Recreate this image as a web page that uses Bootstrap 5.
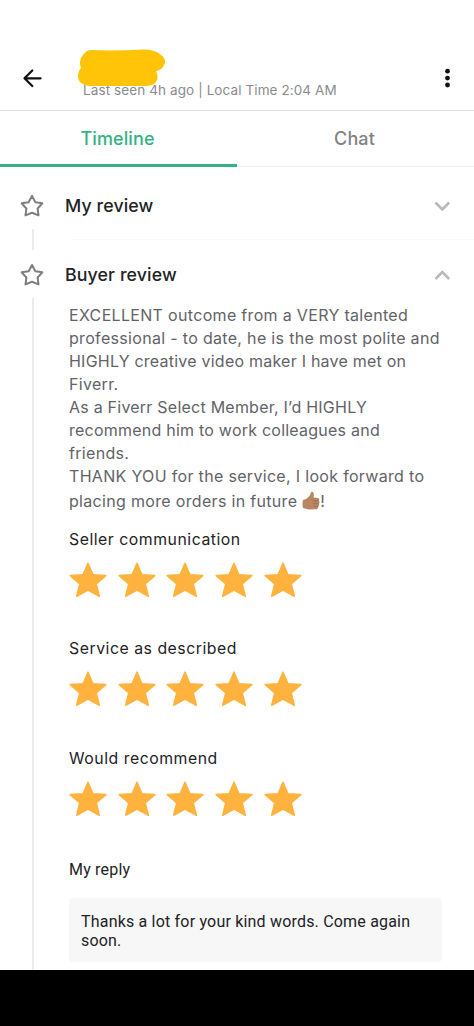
<!DOCTYPE html>
<html lang="en">
<head>
    <meta charset="UTF-8">
    <meta name="viewport" content="width=device-width, initial-scale=1.0">
    <title>Order timeline</title>
    <link rel="stylesheet" href="https://cdn.jsdelivr.net/npm/bootstrap@5.3.3/dist/css/bootstrap.min.css">
    <style>
        body {
            font-family: Inter, "Liberation Sans", sans-serif;
            color: #222325;
            background: #fff;
            overflow: hidden;
        }

        svg {
            display: block;
            flex-shrink: 0;
        }

        .screen {
            height: 1026px;
        }

        .top-bar {
            height: 111px;
            padding: 47px 18px 0 22px;
            border-bottom: 1px solid #e0e0e0;
        }

        .back-btn {
            margin-top: 21px;
        }

        .user-info {
            position: relative;
            margin: 33px 0 0 41px;
        }

        .last-seen {
            font-size: 13.5px;
            line-height: 20px;
            letter-spacing: .1px;
            color: #8a8b8f;
            white-space: nowrap;
        }

        .name-cover {
            position: absolute;
            left: -6px;
            top: -32px;
        }

        .tab-bar {
            height: 56px;
        }

        .tab-bar .nav-link {
            height: 56px;
            padding: 0 2px 0 0;
            line-height: 55px;
            font-size: 18px;
            letter-spacing: .1px;
            font-weight: 500;
            color: #818286;
            border-bottom: 1px solid #f1f1f3;
            border-radius: 0;
        }

        .tab-bar .nav-link.active {
            color: #35b283;
            border-bottom: 3px solid #3aae84;
            background: none;
        }

        .timeline {
            padding-top: 5px;
        }

        .rail {
            width: 65px;
            padding: 22px 0 0 20px;
            flex-shrink: 0;
        }

        .rail-line {
            width: 2px;
            margin: 11px 0 0 12px;
            background: #ebebed;
        }

        .short-line {
            height: 21px;
        }

        .item-first {
            height: 69px;
        }

        .item-title {
            padding: 22px 22px 0 0;
            height: 46px;
            font-size: 17.8px;
            font-weight: 550;
            letter-spacing: .1px;
            line-height: 24px;
        }

        .item-divider {
            height: 1px;
            margin: 21px 0 0 7px;
            background: #f8f8f9;
        }

        .item-body {
            padding: 17px 32px 0 4px;
        }

        .review-text {
            font-size: 16px;
            line-height: 23px;
            letter-spacing: .32px;
            color: #626367;
            white-space: nowrap;
        }

        .review-text .tight {
            letter-spacing: .23px;
        }

        .last-line {
            line-height: 26px;
        }

        .thumb {
            display: inline-block;
            vertical-align: -4px;
        }

        .ratings {
            padding-top: 14px;
        }

        .rating {
            height: 109.3px;
        }

        .rating-label {
            font-size: 15.8px;
            line-height: 24px;
            letter-spacing: .53px;
        }

        .stars {
            margin-top: 10px;
            gap: 10.7px;
        }

        .roboto {
            font-family: Roboto, sans-serif;
            letter-spacing: .19px;
        }

        .reply-title {
            margin-top: 4px;
            font-size: 16px;
            line-height: 20px;
        }

        .reply-box {
            height: 64px;
            margin-top: 18px;
            padding: 14px 12px;
            background: #f7f7f7;
            border-radius: 4px;
            font-size: 16px;
            line-height: 19px;
            white-space: nowrap;
        }

        .bottom-strip {
            height: 56px;
            background: #000;
        }
    </style>
</head>
<body>

    <!-- Shapes used more than once -->
    <svg width="0" height="0" class="position-absolute">
        <symbol id="star-full" viewBox="0 0 38 36">
            <path d="M19 1.2L23.9 12.8L36.8 13.6L27.2 21.9L30.3 34.2L19 28L7.7 34.2L10.8 21.9L1.2 13.6L14.1 12.8Z" fill="#ffb33e" stroke="#ffb33e" stroke-width="1.6" stroke-linejoin="round"/>
        </symbol>
        <symbol id="star-line" viewBox="0 0 24 24">
            <path d="M12 2L15.400 8.300L22.300 9.300L17.600 14.500L18.500 21.400L12 18.800L5.500 21.400L6.400 14.500L1.700 9.300L8.600 8.300Z" fill="none" stroke="#7d7e82" stroke-width="2" stroke-linejoin="round"/>
        </symbol>
    </svg>

    <div class="screen d-flex flex-column">
        <header class="top-bar d-flex align-items-start">
            <svg class="back-btn" width="20" height="20" viewBox="0 0 20 20" fill="none" stroke="#111" stroke-width="2.2" stroke-linecap="round" stroke-linejoin="round">
                <path d="M18.600 10.300H2.500M10.300 2.500L2.500 10.300L10.300 18"/>
            </svg>
            <div class="user-info">
                <div class="last-seen">Last seen 4h ago | Local Time 2:04 AM</div>
                <svg class="name-cover" width="90" height="40" viewBox="0 0 90 40">
                    <path d="M15 2Q35 3 65 1.500Q78 1 84 7Q91 12 86 19Q84 22 79 23Q83 31 77 36Q74 38 65 38L12 38Q2 37 1 29Q1 23 4 20Q1 12 6 7Q9 2 15 2Z" fill="#ffc408"/>
                </svg>
            </div>
            <svg class="back-btn ms-auto" width="18" height="20" viewBox="0 0 18 20" fill="#111">
                <circle cx="9.5" cy="3.2" r="2.4"/>
                <circle cx="9.5" cy="10.1" r="2.4"/>
                <circle cx="9.5" cy="17" r="2.4"/>
            </svg>
        </header>

        <nav class="tab-bar nav nav-justified flex-nowrap">
            <a class="nav-link active" href="#">Timeline</a>
            <a class="nav-link" href="#">Chat</a>
        </nav>

        <main class="timeline d-flex flex-column flex-grow-1">
            <section class="item-first d-flex">
                <div class="rail">
                    <svg width="24" height="24"><use href="#star-line"/></svg>
                    <div class="rail-line short-line"></div>
                </div>
                <div class="flex-grow-1">
                    <div class="item-title d-flex justify-content-between align-items-center">
                        <span>My review</span>
                        <svg width="20" height="20" viewBox="0 0 20 20" fill="none" stroke="#b9b9bc" stroke-width="2.6">
                            <path d="M3.500 6.500L10.300 13.300L17.100 6.500"/>
                        </svg>
                    </div>
                    <div class="item-divider"></div>
                </div>
            </section>

            <section class="d-flex flex-grow-1">
                <div class="rail d-flex flex-column">
                    <svg width="24" height="24"><use href="#star-line"/></svg>
                    <div class="rail-line flex-grow-1"></div>
                </div>
                <div class="flex-grow-1">
                    <div class="item-title d-flex justify-content-between align-items-center">
                        <span>Buyer review</span>
                        <svg width="20" height="20" viewBox="0 0 20 20" fill="none" stroke="#b9b9bc" stroke-width="2.6">
                            <path d="M3.500 14L10.300 7.200L17.100 14"/>
                        </svg>
                    </div>
                    <div class="item-body">
                        <div class="review-text">
                            <div>EXCELLENT outcome from a VERY talented</div>
                            <div>professional - to date, he is the most polite and</div>
                            <div class="tight">HIGHLY creative video maker I have met on</div>
                            <div>Fiverr.</div>
                            <div class="tight">As a Fiverr Select Member, I’d HIGHLY</div>
                            <div class="tight">recommend him to work colleagues and</div>
                            <div>friends.</div>
                            <div>THANK YOU for the service, I look forward to</div>
                            <div class="last-line">placing more orders in future <svg class="thumb" width="18" height="20" viewBox="0 0 18 20"><path d="M1 9Q5 8 7.500 5L9 1.500Q9.500 .3 10.800 1Q12.500 2 11.500 6.500L16 7Q18 7.800 16.800 9.700Q18.300 11 16.900 12.700Q17.900 14.200 16.300 15.500Q16.600 18 14 18.300L7 18.500L1 17Q0 13 1 9Z" fill="#b98662"/><path d="M11 9.800H16.500M11 12.700H16.500M11 15.500H16" stroke="#966a4b" stroke-width=".7"/></svg>!</div>
                        </div>

                        <div class="ratings">
                            <div class="rating">
                                <div class="rating-label">Seller communication</div>
                                <div class="stars d-flex"></div>
                            </div>
                            <div class="rating">
                                <div class="rating-label">Service as described</div>
                                <div class="stars d-flex"></div>
                            </div>
                            <div class="rating">
                                <div class="rating-label">Would recommend</div>
                                <div class="stars d-flex"></div>
                            </div>
                        </div>

                        <div class="reply-title roboto">My reply</div>
                        <div class="reply-box roboto">Thanks a lot for your kind words. Come again<br>soon.</div>
                    </div>
                </div>
            </section>
        </main>

        <div class="bottom-strip"></div>
    </div>

    <script src="https://cdn.jsdelivr.net/npm/bootstrap@5.3.3/dist/js/bootstrap.bundle.min.js"></script>
    <script>
        // five full stars in every rating row
        document.querySelectorAll('.stars').forEach(row => {
            row.innerHTML = '<svg width="38" height="36"><use href="#star-full"/></svg>'.repeat(5);
        });
    </script>

</body>
</html>
